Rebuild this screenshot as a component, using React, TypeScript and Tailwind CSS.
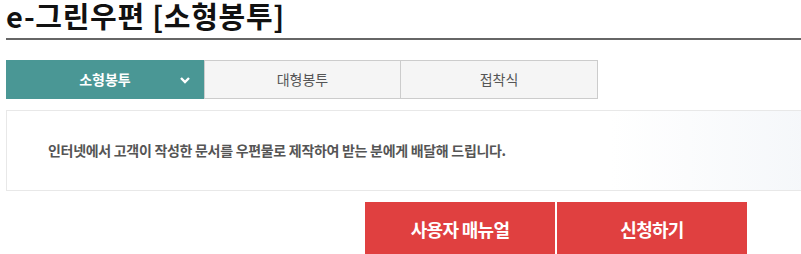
const font = { fontFamily: '"Noto Sans CJK KR", "Noto Sans", sans-serif' };

const tabs = ["소형봉투", "대형봉투", "접착식"];

export default function App() {
  return (
    <div className="w-full overflow-hidden bg-white" style={font}>
      <div className="ml-[6px] w-[1100px]">
        <div className="h-[40px] border-b-2 border-[#666]">
          <h1 className="text-[29px] font-bold leading-[31px] tracking-[0.7px] text-[#111]">
            e-그린우편 [소형봉투]
          </h1>
        </div>

        <div className="mt-[20px] flex h-[39px]">
          <div className="relative flex w-[198px] items-center justify-center bg-[#4a9795] text-[14px] font-bold text-white">
            {tabs[0]}
            <svg className="absolute left-[174px] top-[17px]" width="10" height="7" viewBox="0 0 10 7">
              <polyline points="1,1 5,5 9,1" fill="none" stroke="white" strokeWidth="2.4" />
            </svg>
          </div>
          {tabs.slice(1).map((t, i) => (
            <div
              key={t}
              className={`flex w-[197px] items-center justify-center border border-[#ccc] bg-[#f5f5f5] text-[14px] text-[#555] ${i > 0 ? "border-l-0" : ""}`}
            >
              {t}
            </div>
          ))}
        </div>

        <div className="mt-[11px] flex h-[81px] items-center border border-[#e8e8e8] bg-gradient-to-r from-white from-[55%] to-[#f1f4f8] to-[80%] pl-[41px]">
          <p className="text-[14px] font-bold tracking-[-0.3px] text-[#555]">
            인터넷에서 고객이 작성한 문서를 우편물로 제작하여 받는 분에게 배달해 드립니다.
          </p>
        </div>

        <div className="mt-[11px] flex justify-center gap-[2px]">
          <button className="h-[54px] w-[190px] bg-[#e04040] text-[18px] font-bold tracking-[-0.7px] text-white">
            사용자 매뉴얼
          </button>
          <button className="h-[54px] w-[190px] bg-[#e04040] text-[18px] font-bold tracking-[-0.7px] text-white">
            신청하기
          </button>
        </div>
      </div>
    </div>
  );
}
